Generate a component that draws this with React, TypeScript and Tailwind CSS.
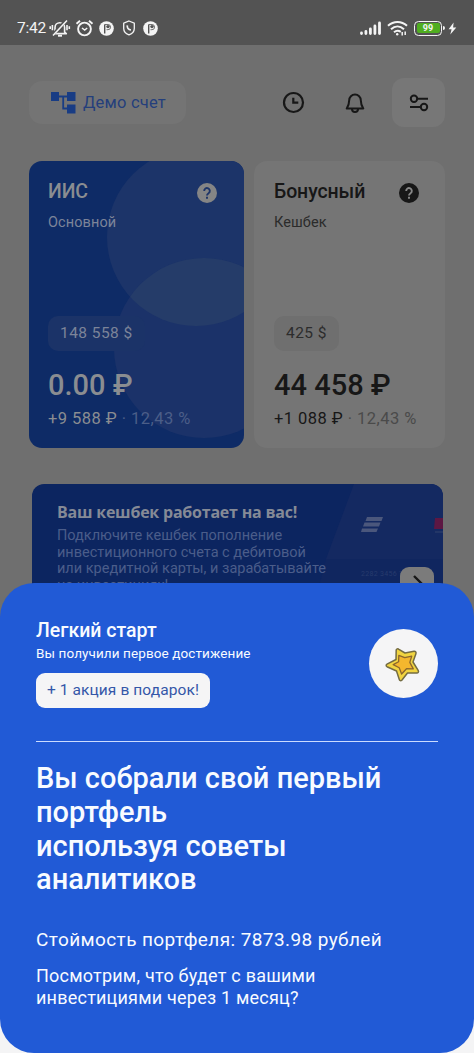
import type { ReactNode } from "react";

function StatusBar() {
  return (
    <div className="flex h-[45px] items-center justify-between bg-[#535353] pl-[17px] pr-[17px] pt-[11px] text-[#f4f4f4]">
      <div className="flex items-center">
        <span className="w-[30px] whitespace-nowrap text-[15.5px] leading-5 tracking-[-0.2px]">7:42</span>
        <svg className="ml-[2px]" width="22" height="20" viewBox="0 0 22 20" fill="none" stroke="currentColor" strokeWidth="1.6">
          <path d="M6 14V9.500a4.800 4.800 0 0 1 9.600 0V14l1.700 1.600H4.300Z" strokeLinejoin="round" />
          <path d="M9 17.700h4" strokeWidth="2" />
          <path d="M3.500 17 17 2.500" stroke="#535353" strokeWidth="3.200" />
          <path d="M4 17.500 18 2.500M3.400 7v5.200M1.200 8.300v2.600M18 7v5.200M20.300 8.300v2.600" />
        </svg>
        <svg className="ml-[4px]" width="19" height="19" viewBox="0 0 19 19" fill="none" stroke="currentColor" strokeWidth="1.900">
          <circle cx="9.500" cy="10" r="6.400" />
          <path d="M1.500 4.800 5 1.800M17.500 4.800 14 1.800" />
          <path d="m7 9 2.700 2 2.500-2" strokeWidth="1.500" />
        </svg>
        <BadgeIcon className="ml-[5px]" />
        <svg className="ml-[8px]" width="14" height="16" viewBox="0 0 14 16" fill="none" stroke="currentColor" strokeWidth="1.300">
          <path d="m7 1 5.300 2.200v5.200c0 3-2.200 5.200-5.300 6.500-3.100-1.300-5.300-3.500-5.300-6.500V3.200Z" />
          <path d="M5.300 5.300c-.3 2.600 1 4.400 3.700 4.700" strokeWidth="1.700" />
        </svg>
        <BadgeIcon className="ml-[7px]" />
      </div>
      <div className="flex items-center">
        <svg width="22" height="14" viewBox="0 0 22 14" fill="none" stroke="currentColor" strokeWidth="2.800" strokeLinecap="round">
          <path d="M1.500 12v.500M5.900 10.500v2M10.400 8v4.500M14.900 5v7.500M19.500 2v10.500" />
        </svg>
        <svg className="ml-[5px]" width="21" height="17" viewBox="0 0 21 17" fill="none" stroke="currentColor" strokeWidth="2">
          <path d="M1 5.800c5.600-5.200 13.400-5.200 19 0M4 9.300c4-3.700 9-3.700 13 0M7 12.300c2-1.700 4.500-1.900 6.800-.4" />
          <circle cx="10.200" cy="14.300" r="1.200" fill="currentColor" stroke="none" />
          <path d="M15.200 12v3.500M18.200 11.500v3.500" strokeWidth="1.500" />
        </svg>
        <div className="ml-[6px] flex h-[15px] w-[28px] items-center rounded-[4.5px] border-[1.5px] border-[#f4f4f4] p-[1.5px]">
          <span className="flex h-full w-full items-center justify-center rounded-[2px] bg-[#4fae20] text-[9px] font-bold leading-none">99</span>
        </div>
        <span className="ml-px h-1 w-[2px] rounded-r bg-[#f4f4f4]" />
        <svg className="ml-[3px]" width="9" height="13" viewBox="0 0 9 13" fill="currentColor">
          <path d="M5.600.5.600 7.200h3L2.300 12.500 8.300 5.500h-3.200Z" />
        </svg>
      </div>
    </div>
  );
}

function BadgeIcon({ className }: { className: string }) {
  return (
    <svg className={className} width="15" height="15" viewBox="0 0 15 15">
      <circle cx="7.500" cy="7.500" r="7.300" fill="#f4f4f4" />
      <path d="M5.700 3.500v9" stroke="#535353" strokeWidth="1.400" />
      <path d="M5.700 3.500h3.300a2.600 2.600 0 0 1 0 5.200H7.500" stroke="#535353" strokeWidth=".8" fill="none" />
      <circle cx="9" cy="5.600" r="1.700" fill="#535353" />
    </svg>
  );
}

function Header() {
  return (
    <div className="mt-[33px] flex h-[49px] items-center pl-[29px] text-[#171717]">
      <div className="flex h-[43px] w-[157px] items-center rounded-[13px] bg-[#747474] pl-[22px] text-[#243f7c]">
        <svg width="25" height="23" viewBox="0 0 25 23">
          <path fill="#183c84" d="M0 1h8v9H0zM16 1h8.500v9H16zM16 13.500h8.500V22.500H16z" />
          <path d="M8 5.500h8M12.200 5.500v12H16" stroke="#183c84" strokeWidth="1.800" fill="none" />
        </svg>
        <span className="ml-[7px] whitespace-nowrap text-[16.500px] leading-6 tracking-[0.2px]">Демо счет</span>
      </div>
      <svg className="ml-[96px]" width="23" height="23" viewBox="0 0 23 23" fill="none" stroke="currentColor" strokeWidth="2.200">
        <circle cx="11.500" cy="11.500" r="9.500" />
        <path d="M11.300 6.700v4.900h5" />
      </svg>
      <svg className="ml-[39px]" width="22" height="22" viewBox="0 0 22 22" fill="none" stroke="currentColor" strokeWidth="2" strokeLinejoin="round">
        <path d="M5.200 8.300a5.800 5.800 0 0 1 11.600 0c0 4.200 1 5.700 2.500 8.200H2.700c1.500-2.500 2.500-4 2.500-8.200Z" />
        <path d="M8 17a3 3 0 0 0 6 0" />
      </svg>
      <div className="ml-[26px] flex h-[49px] w-[53px] items-center justify-center rounded-[12px] bg-[#777777]">
        <svg width="20" height="18" viewBox="0 0 20 18" fill="none" stroke="currentColor" strokeWidth="2">
          <circle cx="5" cy="4.800" r="3.200" />
          <path d="M8.200 4.800H19M1 13h11" />
          <circle cx="15" cy="13" r="3.200" />
        </svg>
      </div>
    </div>
  );
}

function Help({ disc, mark }: { disc: string; mark: string }) {
  return (
    <svg width="20" height="20" viewBox="0 0 20 20" fill="none">
      <circle cx="10" cy="10" r="10" fill={disc} />
      <path d="M7.200 8a2.800 2.800 0 1 1 4.500 2.100c-1.100.8-1.700 1.200-1.700 2.300M10 13.700v2" stroke={mark} strokeWidth="1.900" />
    </svg>
  );
}

type AccountProps = {
  title: string;
  kind: string;
  usd: string;
  total: string;
  gain: string;
  className: string;
  chip: string;
  muted: string;
  kindColor: string;
  help: ReactNode;
  art?: ReactNode;
};

function AccountCard({ title, kind, usd, total, gain, className, chip, muted, kindColor, help, art }: AccountProps) {
  return (
    <section className={`relative h-[287px] overflow-hidden rounded-[13px] pt-[18px] ${className}`}>
      {art}
      <div className="relative flex h-full flex-col items-start">
        <div className="flex w-full items-start justify-between">
          <h2 className="whitespace-nowrap text-[19.500px] font-medium leading-[26px] tracking-[-0.1px]">{title}</h2>
          <div className="mt-[4px]">{help}</div>
        </div>
        <p className={`mt-[8px] whitespace-nowrap text-[14.500px] leading-5 tracking-[0.1px] ${kindColor}`}>{kind}</p>
        <div className={`mt-[83px] flex h-[35px] items-center whitespace-nowrap rounded-[10px] px-[12px] pt-px text-[15.500px] tracking-[0.45px] ${chip}`}>
          {usd}
        </div>
        <p className="mt-[16px] whitespace-nowrap text-[29px] font-medium leading-9">{total}</p>
        <p className="mt-[4px] whitespace-nowrap text-[16.500px] leading-6 tracking-[0.45px]">
          {gain} <span className={muted}>· 12,43 %</span>
        </p>
      </div>
    </section>
  );
}

function CashbackBanner() {
  return (
    <section className="relative ml-[32px] mt-[36px] h-[130px] w-[411px] overflow-hidden rounded-[12px] bg-[#0c2560] pl-[25px] pt-[18px]">
      <svg className="absolute left-0 top-0" width="411" height="130" viewBox="0 0 411 130">
        <path d="M322 0h89v75H294Z" fill="#142961" />
        <path d="M294 75h117v55H280Z" fill="#10265f" />
        <path d="M335 33h16l-1.500 4H333.500zM332.500 38.500h16l-1.500 4H331zM330 44.500h16l-1.500 3.500H329z" fill="#4b577c" />
        <path d="M403 34h8v11h-9z" fill="#5d1743" />
        <path d="M403 48h8" stroke="#32446f" />
      </svg>
      <h3 className="relative whitespace-nowrap font-['Open_Sans'] text-[16px] font-bold leading-5 tracking-[-0.22px] text-[#858a96]">
        Ваш кешбек работает на вас!
      </h3>
      <p className="relative mt-[6px] whitespace-nowrap text-[14.500px] leading-[16.500px] text-[#4b5d8a]">
        Подключите кешбек пополнение
        <br />
        инвестиционного счета с дебитовой
        <br />
        или кредитной карты, и зарабатывайте
        <br />
        на инвестициях!
      </p>
      <span className="absolute left-[329px] top-[87px] text-[7px] leading-none tracking-[0.3px] text-[#273b6d]">2282 3456 7</span>
      <div className="absolute left-[368px] top-[83px] flex h-[35px] w-[34px] justify-center rounded-[9px] bg-[#7b7b7b] pt-[8px]">
        <svg width="20" height="18" viewBox="0 0 20 18" fill="none" stroke="#171717" strokeWidth="2.400">
          <path d="m7 1 7.500 7.500L7 16" />
        </svg>
      </div>
    </section>
  );
}

function StarBadge() {
  return (
    <div className="mt-[7px] flex h-[69px] w-[69px] items-center justify-center rounded-full bg-[#f5f5f6]">
      <svg className="-ml-[2px]" width="36" height="36" viewBox="0 0 36 36" strokeLinejoin="round">
        <path
          d="M11.200 4c.3-1.300 1.700-1.500 2.700-.7L20 7l9-1.700c1.600-.1 2.500 1 1.900 2.400L28 16l5.300 8.700c.6 1.300-.2 2.300-1.600 2.200L22.500 27l-5.700 7.200c-1 .9-2.200.5-2.500-.7L11.500 25 2 20.700c-1.100-.6-1.100-1.900 0-2.500L11 13.500Z"
          fill="#f1d441"
          stroke="#746c42"
          strokeWidth="1.500"
        />
        <path d="m13.800 9.400 6 2.200 6.900-1.400-1.900 6.200 3.500 6.500-6.800-.2-4.900 5.300-2.400-6.200-6-3.200 5.400-2.900Z" fill="#f4b72e" stroke="#8b672d" strokeWidth="1.300" />
      </svg>
    </div>
  );
}

function AchievementSheet() {
  return (
    <div className="absolute inset-x-0 bottom-0 h-[470px] rounded-[34px] bg-[#215ad6] px-[36px] pt-[35px] text-[#f8fbff]">
      <div className="flex h-[123px] items-start justify-between">
        <div>
          <h2 className="whitespace-nowrap pt-px text-[19.500px] font-medium leading-6">Легкий старт</h2>
          <p className="whitespace-nowrap text-[13.500px] leading-5 tracking-[0.1px]">Вы получили первое достижение</p>
          <div className="mt-[10px] flex h-[35px] w-[174px] items-center justify-center whitespace-nowrap rounded-[9px] bg-[#f5f5f6] pt-px text-[15.500px] tracking-[0.1px] text-[#3457a8]">
            + 1 акция в подарок!
          </div>
        </div>
        <div className="pt-[4px]">
          <StarBadge />
        </div>
      </div>
      <div className="h-px bg-[#cbdcff]" />
      <h1 className="mt-[20px] whitespace-nowrap text-[29px] font-medium leading-[33.750px]">
        Вы собрали свой первый
        <br />
        портфель
        <br />
        используя советы
        <br />
        аналитиков
      </h1>
      <p className="mt-[31px] whitespace-nowrap text-[19px] leading-6 tracking-[0.4px]">Стоймость портфеля: 7873.98 рублей</p>
      <p className="mt-[13px] whitespace-nowrap text-[18px] leading-[21.500px] tracking-[0.22px]">
        Посмотрим, что будет с вашими
        <br />
        инвестициями через 1 месяц?
      </p>
    </div>
  );
}

export default function App() {
  return (
    <div className="relative h-[1053px] w-[474px] overflow-hidden bg-[#f4f4f5] font-[Roboto,sans-serif]">
      <div className="h-[700px] bg-[#6f6f6f]">
        <StatusBar />
        <Header />
        <div className="mt-[34px] flex gap-[10px] pl-[29px]">
          <AccountCard
            title="ИИС"
            kind="Основной"
            usd="148 558 $"
            total="0.00 ₽"
            gain="+9 588 ₽"
            className="w-[215px] bg-[#0e2b66] pl-[19px] pr-[27px] text-[#8a8d91]"
            chip="bg-[#1b3368] text-[#7c8499]"
            kindColor="text-[#7c8499]"
            muted="text-[#4b5e88]"
            help={<Help disc="#858585" mark="#1d3468" />}
            art={
              <svg className="absolute inset-0" width="215" height="287" viewBox="0 0 215 287">
                <defs>
                  <clipPath id="upper-disc">
                    <circle cx="167" cy="76" r="89" />
                  </clipPath>
                </defs>
                <circle cx="167" cy="76" r="89" fill="#1c3469" />
                <circle cx="175" cy="187" r="90" fill="#1b3269" />
                <circle cx="175" cy="187" r="90" fill="#253c69" clipPath="url(#upper-disc)" />
              </svg>
            }
          />
          <AccountCard
            title="Бонусный"
            kind="Кешбек"
            usd="425 $"
            total="44 458 ₽"
            gain="+1 088 ₽"
            className="w-[191px] bg-[#757575] pl-[20px] pr-[26px] text-[#171717]"
            chip="bg-[#6f6f6f] text-[#2c2c2c]"
            kindColor="text-[#2b2b2b]"
            muted="text-[#4a4a4a]"
            help={<Help disc="#171717" mark="#888888" />}
          />
        </div>
        <CashbackBanner />
      </div>
      <AchievementSheet />
    </div>
  );
}
